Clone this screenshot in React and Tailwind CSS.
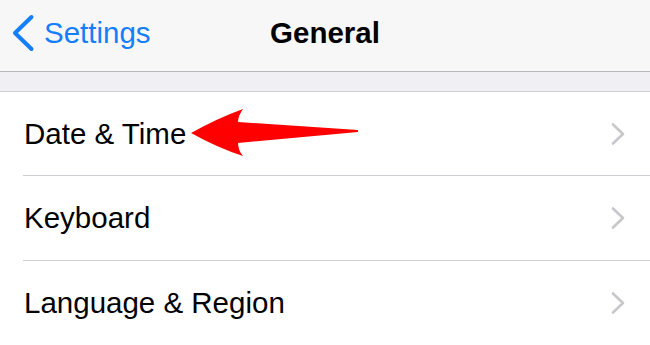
import React from "react";

function Chevron() {
  return (
    <svg width="16" height="24" viewBox="0 0 16 24" className="shrink-0">
      <polyline points="3,2.5 13,12 3,21.5" fill="none" stroke="#c7c7cc" strokeWidth="2.6" strokeLinecap="round" strokeLinejoin="round" />
    </svg>
  );
}

function Row({ label, last, tall }) {
  return (
    <div className="pl-[23px]">
      <div className={"flex items-center justify-between pr-[24px] " + (tall ? "h-[85px] " : "h-[84px] ") + (last ? "" : "border-b border-[#cfced3]")}>
        <span className="pl-px text-[29.5px] leading-none text-black">{label}</span>
        <Chevron />
      </div>
    </div>
  );
}

export default function App() {
  return (
    <div className="relative w-[650px] h-[345px] overflow-hidden bg-white" style={{ fontFamily: '"Liberation Sans", Arial, sans-serif' }}>
      <div className="relative h-[72px] bg-[#f7f7f7] border-b border-[#b8b8bc] flex items-center justify-center pb-[5px]">
        <div className="absolute left-[11px] top-[13px] flex items-center">
          <svg width="26" height="40" viewBox="0 0 26 40">
            <polyline points="20.5,4 4,20 20.5,36" fill="none" stroke="#157efb" strokeWidth="4" strokeLinecap="round" strokeLinejoin="round" />
          </svg>
          <span className="ml-[7px] text-[29.5px] leading-none text-[#157efb]">Settings</span>
        </div>
        <span className="text-[29.5px] leading-none font-bold text-black">General</span>
      </div>
      <div className="h-[20px] bg-[#efeff4] border-b border-[#cfced3]" />
      <div className="bg-white">
        <Row label="Date & Time" />
        <Row label="Keyboard" tall />
        <Row label="Language & Region" last />
      </div>
      <svg className="absolute left-0 top-0 pointer-events-none" width="650" height="345" viewBox="0 0 650 345">
        <path d="M191,133 Q218,118 243,109 Q238,116 238,122 L358,130 L358,132 L238,143 Q238,150 243,156 Q218,148 191,133 Z" fill="#ff0000" />
      </svg>
    </div>
  );
}
